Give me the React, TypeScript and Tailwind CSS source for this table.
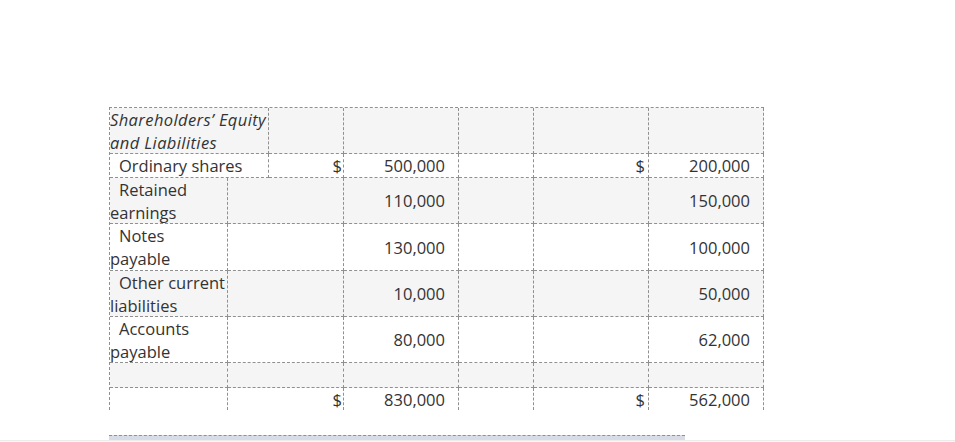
import React from 'react';

const wideFirst = ['w-[159px]', 'w-[75px]'];
const narrowFirst = ['w-[118px]', 'w-[116px]'];

function Row({
    first,
    lines = [],
    italic,
    h,
    bg,
    d1,
    n1,
    d2,
    n2,
    last,
}: {
    first: string[];
    lines?: string[];
    italic?: boolean;
    h: string;
    bg: string;
    d1?: boolean;
    n1?: string;
    d2?: boolean;
    n2?: string;
    last?: boolean;
}) {
    const cell = `border-r border-dashed border-[#909090] ${last ? '' : 'border-b'}`;
    return (
        <div className={`flex ${h} ${bg}`}>
            <div className={`${first[0]} ${cell} shrink-0 whitespace-nowrap ${italic ? 'italic tracking-[0.4px]' : ''}`}>
                {lines.map((l, i) => (
                    <div key={i} className={!italic && i === 0 ? 'pl-[9px]' : ''}>
                        {l}
                    </div>
                ))}
            </div>
            <div className={`${first[1]} ${cell} shrink-0 flex items-center justify-end pr-[1px]`}>
                {d1 ? '$' : ''}
            </div>
            <div className={`w-[115px] ${cell} shrink-0 flex items-center justify-end pr-[13px]`}>
                {n1}
            </div>
            <div className={`w-[75px] ${cell} shrink-0`} />
            <div className={`w-[115px] ${cell} shrink-0 flex items-center justify-end pr-[3px]`}>
                {d2 ? '$' : ''}
            </div>
            <div className={`w-[115px] ${cell} shrink-0 flex items-center justify-end pr-[13px]`}>
                {n2}
            </div>
        </div>
    );
}

export default function App() {
    return (
        <div className="relative h-[442px] w-[955px] overflow-hidden bg-white font-['Open_Sans','Liberation_Sans',sans-serif] text-[16.5px] leading-[23px] text-[#333]">
            <div className="pt-[107px] pl-[109px]">
                <div className="w-[655px] border-t border-l border-dashed border-[#909090]">
                    <Row first={wideFirst} lines={['Shareholders’ Equity', 'and Liabilities']} italic h="h-[46px]" bg="bg-[#f5f5f5]" />
                    <Row first={wideFirst} lines={['Ordinary shares']} h="h-[24px]" bg="bg-white" d1 n1="500,000" d2 n2="200,000" />
                    <Row first={narrowFirst} lines={['Retained', 'earnings']} h="h-[46px]" bg="bg-[#f5f5f5]" n1="110,000" n2="150,000" />
                    <Row first={narrowFirst} lines={['Notes', 'payable']} h="h-[47px]" bg="bg-white" n1="130,000" n2="100,000" />
                    <Row first={narrowFirst} lines={['Other current', 'liabilities']} h="h-[46px]" bg="bg-[#f5f5f5]" n1="10,000" n2="50,000" />
                    <Row first={narrowFirst} lines={['Accounts', 'payable']} h="h-[46px]" bg="bg-white" n1="80,000" n2="62,000" />
                    <Row first={narrowFirst} h="h-[25px]" bg="bg-[#f5f5f5]" />
                    <Row first={narrowFirst} h="h-[22px]" bg="bg-white" d1 n1="830,000" d2 n2="562,000" last />
                </div>
                <div className="mt-[25px] h-[5px] w-[576px] border-t border-dashed border-[#909090] bg-[#d8dce7]" />
            </div>
            <div className="absolute bottom-0 left-0 h-[2px] w-full border-t border-[#ececec] bg-[#f7f7f7]" />
        </div>
    );
}
